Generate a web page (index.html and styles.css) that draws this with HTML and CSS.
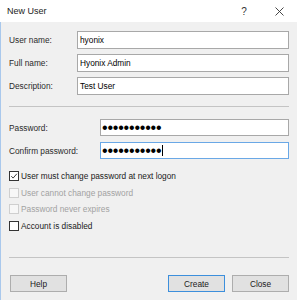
FILE: index.html
```html
<!DOCTYPE html>
<html lang="en">
<head>
<meta charset="utf-8">
<title>New User</title>
<link rel="stylesheet" href="styles.css">
</head>
<body>
<div class="window">
  <div class="titlebar">
    <span class="title">New User</span>
    <span class="tb-btn tb-help">?</span>
    <span class="tb-btn tb-close">
      <svg width="9" height="9" viewBox="0 0 9 9"><path d="M0.5 0.5 L8.5 8.5 M8.5 0.5 L0.5 8.5" stroke="#333" stroke-width="0.9" fill="none"/></svg>
    </span>
  </div>
  <div class="content">
    <div class="grid grid-names">
      <label class="lbl">User name:</label>
      <div class="field">hyonix</div>
      <label class="lbl">Full name:</label>
      <div class="field">Hyonix Admin</div>
      <label class="lbl">Description:</label>
      <div class="field">Test User</div>
    </div>
    <div class="sep sep-1"></div>
    <div class="grid grid-pass">
      <label class="lbl">Password:</label>
      <div class="field pass">•••••••••••</div>
      <label class="lbl">Confirm password:</label>
      <div class="field pass focus">•••••••••••<span class="caret"></span></div>
    </div>
    <div class="checks">
      <div class="check">
        <span class="box">
          <svg width="10" height="10" viewBox="0 0 10 10"><path d="M1.6 5.2 L3.9 7.6 L8.6 2.2" stroke="#222" stroke-width="1.1" fill="none"/></svg>
        </span>
        <span class="ctext">User must change password at next logon</span>
      </div>
      <div class="check disabled">
        <span class="box"></span>
        <span class="ctext">User cannot change password</span>
      </div>
      <div class="check disabled">
        <span class="box"></span>
        <span class="ctext">Password never expires</span>
      </div>
      <div class="check">
        <span class="box"></span>
        <span class="ctext">Account is disabled</span>
      </div>
    </div>
    <div class="sep sep-2"></div>
    <div class="buttons">
      <button class="btn">Help</button>
      <span class="spacer"></span>
      <button class="btn default">Create</button>
      <button class="btn">Close</button>
    </div>
  </div>
</div>
</body>
</html>
```

FILE: styles.css
```css
html, body {
  margin: 0;
  padding: 0;
}
body {
  width: 297px;
  height: 300px;
  background: #f0f0f0;
  font-family: "Liberation Sans", Arial, sans-serif;
  font-size: 8.3px;
  color: #1a1a1a;
  overflow: hidden;
}
.window {
  display: flex;
  flex-direction: column;
  height: 300px;
}
.titlebar {
  height: 22px;
  background: #ffffff;
  display: flex;
  align-items: center;
  padding-left: 7px;
  flex: none;
}
.title {
  flex: 1;
  font-size: 9px;
  color: #222;
}
.tb-btn {
  display: flex;
  align-items: center;
  justify-content: center;
  height: 22px;
}
.tb-help {
  width: 34px;
  font-size: 10px;
  color: #333;
}
.tb-close {
  width: 36px;
}
.content {
  flex: 1;
  border-left: 1px solid #a9c8ec;
  padding: 9px 8px 0 8px;
}
.grid {
  display: grid;
  align-items: center;
}
.grid-names {
  grid-template-columns: 68px 1fr;
  grid-auto-rows: 18px;
  row-gap: 5px;
}
.grid-pass {
  margin-top: 12px;
  grid-template-columns: 91px 1fr;
  grid-auto-rows: 17px;
  row-gap: 6px;
}
.lbl {
  color: #2a2a2a;
  white-space: nowrap;
}
.field {
  height: 100%;
  box-sizing: border-box;
  background: #ffffff;
  border: 1px solid #a8a8a8;
  display: flex;
  align-items: center;
  padding-left: 2px;
  color: #000;
  white-space: nowrap;
  overflow: hidden;
}
.field.pass {
  font-size: 16px;
  letter-spacing: -0.2px;
  padding-left: 1px;
  line-height: 1;
}
.field.focus {
  border-color: #6aa8e6;
}
.caret {
  display: inline-block;
  width: 1px;
  height: 11px;
  background: #000;
  margin-left: 1px;
}
.sep {
  border-top: 1px solid #c4c4c4;
}
.sep-1 {
  margin-top: 11px;
}
.checks {
  margin-top: 9px;
  display: grid;
  grid-auto-rows: 16.5px;
}
.check {
  display: flex;
  align-items: center;
  gap: 2px;
}
.box {
  width: 10px;
  height: 10px;
  box-sizing: border-box;
  border: 1px solid #333;
  background: #fff;
  display: flex;
  align-items: center;
  justify-content: center;
  flex: none;
}
.box svg {
  display: block;
}
.check .ctext {
  color: #1a1a1a;
}
.check.disabled .box {
  border-color: #cfcfcf;
  background: #f7f7f7;
}
.check.disabled .ctext {
  color: #a2a2a2;
}
.sep-2 {
  margin-top: 23px;
}
.buttons {
  margin-top: 17px;
  display: flex;
  gap: 7px;
  padding-left: 1px;
}
.spacer {
  flex: 1;
}
.btn {
  width: 57px;
  height: 17px;
  box-sizing: border-box;
  background: #e1e1e1;
  border: 1px solid #adadad;
  font-family: "Liberation Sans", Arial, sans-serif;
  font-size: 8.3px;
  color: #1a1a1a;
  padding: 0;
  margin: 0;
}
.btn.default {
  border-color: #3c8fdc;
}
```
